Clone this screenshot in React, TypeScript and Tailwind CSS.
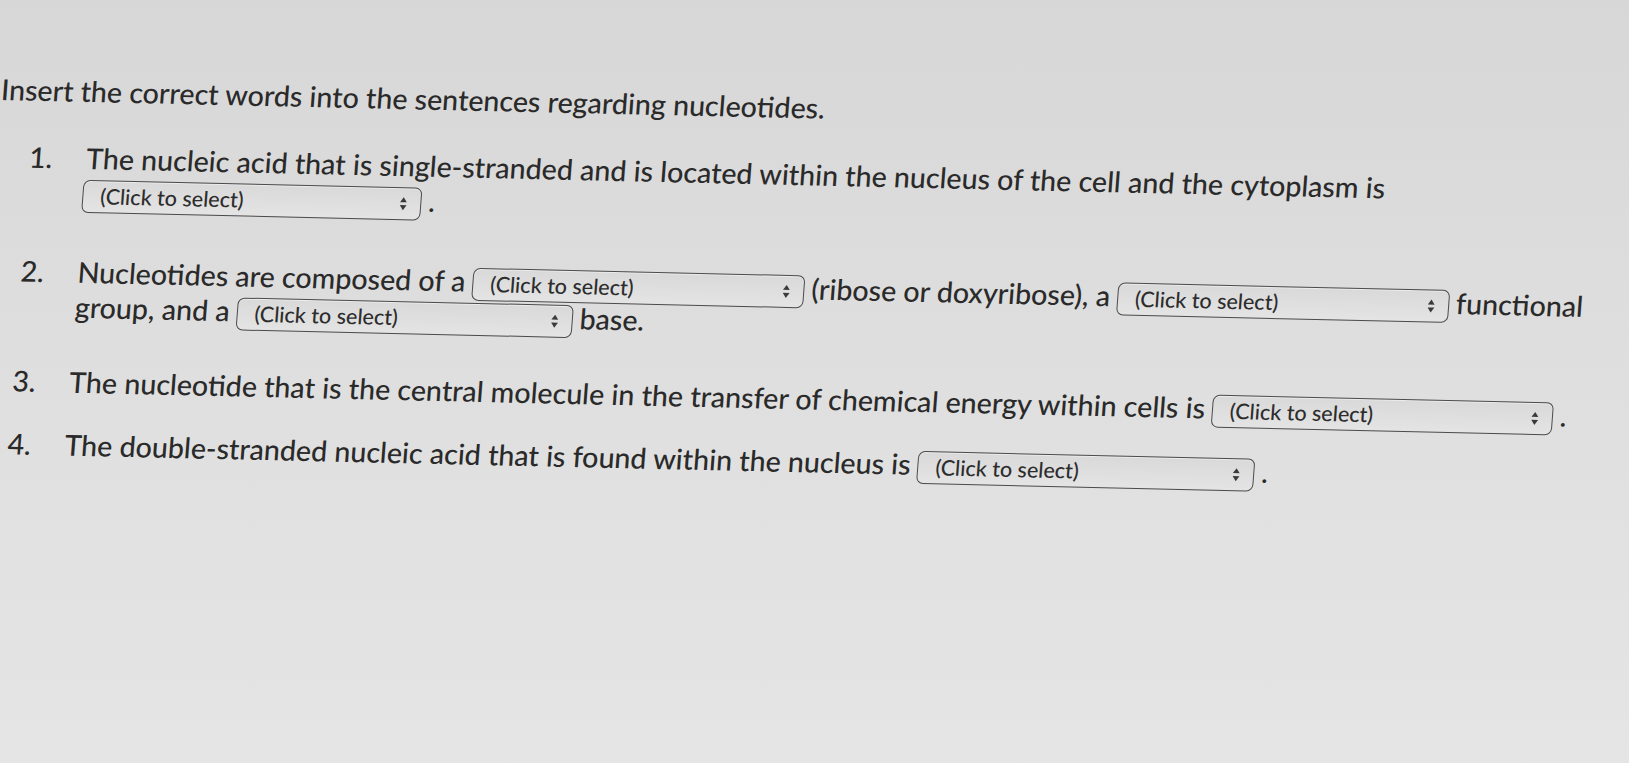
import React from "react";

// Fake native <select> look: rounded box with stacked up/down arrows on the right.
function Picker({ width = 336 }: { width?: number }) {
  return (
    <span
      className="mx-[7px] inline-flex h-[33px] translate-y-[4px] items-center justify-between rounded-[7px] border-[1.5px] border-[#4b4b4b] bg-gradient-to-b from-[#d9d9d9] to-[#e4e4e4] pl-[17px] pr-[13px] align-top shadow-[inset_0_1px_0_rgba(255,255,255,0.5)]"
      style={{ width }}
    >
      <span className="text-[21.5px] font-medium leading-none text-[#2d2d2d]">(Click to select)</span>
      <svg width="8" height="15" viewBox="0 0 8 15" className="shrink-0">
        <path d="M4 1 L7.4 6 H0.6 Z" fill="#3a3a3a" />
        <path d="M4 14 L7.4 9 H0.6 Z" fill="#3a3a3a" />
      </svg>
    </span>
  );
}

function Item({ n, children, className = "" }: { n: string; children: React.ReactNode; className?: string }) {
  return (
    <div className={"grid grid-cols-[57px_1fr] " + className}>
      <span className="leading-[35px]">{n}</span>
      <div className="leading-[35px]">{children}</div>
    </div>
  );
}

export default function App() {
  return (
    <div className="h-[763px] w-full overflow-hidden bg-gradient-to-b from-[#d7d7d7] via-[#dfdfdf] to-[#e5e5e5] font-['Lato','Noto_Sans',sans-serif] text-[28.6px] font-medium text-[#2a2a2a]">
      <div className="origin-top-left rotate-[1.3deg] -skew-x-3 pl-[41px] pt-[72px]">
        <p className="-ml-[33px] leading-[35px]">Insert the correct words into the sentences regarding nucleotides.</p>

        <div className="mt-[32px]">
          <Item n="1.">
            <div className="whitespace-nowrap">
              The nucleic acid that is single-stranded and is located within the nucleus of the cell and the cytoplasm is
            </div>
            <div className="-ml-[8px] whitespace-nowrap">
              <Picker width={339} />.
            </div>
          </Item>

          <Item n="2." className="mt-[44px]">
            <div className="whitespace-nowrap">
              Nucleotides are composed of a<Picker width={332} />(ribose or doxyribose), a<Picker width={332} />functional
            </div>
            <div className="whitespace-nowrap">
              group, and a<Picker width={336} />base.
            </div>
          </Item>

          <Item n="3." className="mt-[40px]">
            <div className="whitespace-nowrap">
              The nucleotide that is the central molecule in the transfer of chemical energy within cells is
              <Picker width={341} />.
            </div>
          </Item>

          <Item n="4." className="mt-[28px]">
            <div className="whitespace-nowrap">
              The double-stranded nucleic acid that is found within the nucleus is<Picker width={337} />.
            </div>
          </Item>
        </div>
      </div>
    </div>
  );
}
